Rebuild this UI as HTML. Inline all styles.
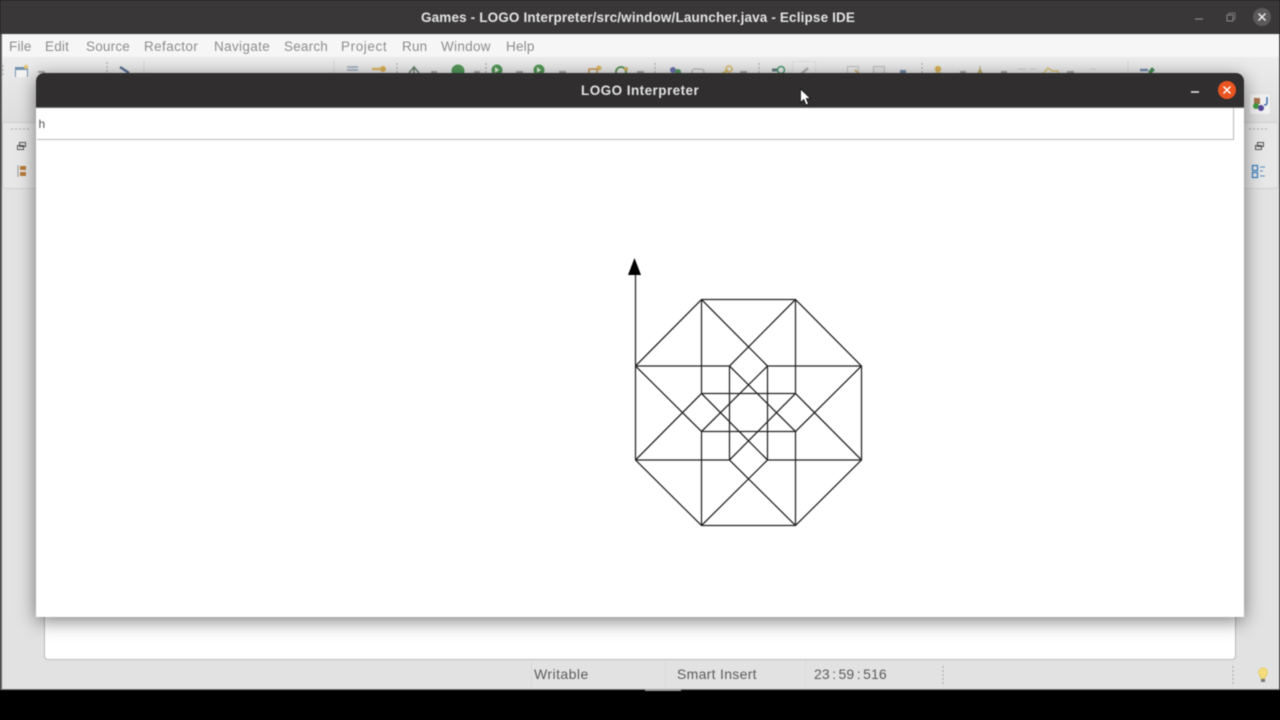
<!DOCTYPE html>
<html lang="en"><head><meta charset="utf-8"><title>Games - LOGO Interpreter</title>
<style>
html,body{margin:0;padding:0;width:1280px;height:720px;overflow:hidden;background:#000}
*{box-sizing:border-box}
#s{position:absolute;left:0;top:0;width:1280px;height:720px;overflow:hidden;font-family:"Liberation Sans","DejaVu Sans",sans-serif;filter:blur(.5px)}
.a{position:absolute}
.t{position:absolute;white-space:nowrap;line-height:1}
.m{top:40px;font-size:13.5px;color:#8d8d8d;letter-spacing:.2px}
.st{top:667px;font-size:14px;color:#5c5c5c;letter-spacing:.2px}
</style></head><body><div id="s">
<!-- Eclipse base -->
<div class="a" style="left:0;top:0;width:1280px;height:690px;background:#e2e2e2"></div>
<div class="a" style="left:0;top:0;width:1280px;height:34px;background:#393737"></div>
<div class="t" style="left:421px;top:11px;font-size:13.5px;font-weight:bold;color:#e4e4e4;letter-spacing:.15px">Games - LOGO Interpreter/src/window/Launcher.java - Eclipse IDE</div>
<div class="a" style="left:0;top:34px;width:1280px;height:23px;background:#f6f6f6"></div>
<div class="t m" style="left:9px">File</div>
<div class="t m" style="left:45px">Edit</div>
<div class="t m" style="left:86px">Source</div>
<div class="t m" style="left:144px;letter-spacing:.4px">Refactor</div>
<div class="t m" style="left:214px;letter-spacing:.35px">Navigate</div>
<div class="t m" style="left:284px">Search</div>
<div class="t m" style="left:341px;letter-spacing:.6px">Project</div>
<div class="t m" style="left:402px">Run</div>
<div class="t m" style="left:441px;letter-spacing:.3px">Window</div>
<div class="t m" style="left:506px">Help</div>
<div class="a" style="left:0;top:57px;width:1280px;height:65px;background:linear-gradient(#ececec,#dedede)"></div>
<!-- window controls -->
<svg class="a" style="left:1180px;top:0" width="100" height="34" viewBox="0 0 100 34">
<path d="M15 19h8" stroke="#8a8888" stroke-width="1.2"/>
<rect x="47" y="15" width="6" height="6" fill="none" stroke="#8a8888"/><path d="M49 15v-2h6v6h-2" fill="none" stroke="#8a8888" stroke-width=".8"/>
<circle cx="82" cy="17" r="9" fill="#5b5959"/><path d="M78.500 13.500l7 7m0-7l-7 7" stroke="#eee" stroke-width="1.500"/>
</svg>
<!-- toolbar icons -->
<svg class="a" style="left:0;top:57px;opacity:.85" width="1280" height="20" viewBox="0 57 1280 20">
<path d="M3 65v2M3 69v2M3 73v2M107 62v2M107 66v2M107 70v2" stroke="#999" stroke-width="1"/>
<path d="M144 60v16M334 60v16" stroke="#d6d6d6"/>
<rect x="15.500" y="67.500" width="12" height="10" fill="#f7f7f7" stroke="#5f84a8"/><rect x="16" y="68" width="11" height="2" fill="#5f84a8"/><circle cx="26" cy="67" r="2" fill="#e5bf55"/>
<path d="M38 72h7" stroke="#999" stroke-width="2"/>
<path d="M120 67l9 6" stroke="#405a85" stroke-width="2.500"/>
<path d="M347 67h11M347 70h11" stroke="#8b9fb5" stroke-width="1.500"/>
<path d="M372 69h8" stroke="#e0b04f" stroke-width="2.500"/><circle cx="383" cy="69" r="3" fill="#d9a83e"/>
<path d="M397 63v2M397 67v2M397 71v2M486 63v2M486 67v2M486 71v2M655 63v2M655 67v2M655 71v2M759 63v2M759 67v2M759 71v2M922 63v2M922 67v2M922 71v2" stroke="#999"/>
<path d="M409 73l5-6 5 6M414 66v8" stroke="#56705a" stroke-width="1.500" fill="none"/>
<circle cx="458" cy="71" r="6.500" fill="#3a8a3f"/><circle cx="497" cy="70" r="5.500" fill="#3a8a3f"/><path d="M495 67l4 3-4 3z" fill="#dff0d8"/><circle cx="539" cy="70" r="5.500" fill="#3a8a3f"/><path d="M537 67l4 3-4 3z" fill="#dff0d8"/>
<path d="M431 72h6M474 72h6M516 72h7M559 72h7M637 72h7M740 72h7M960 72h6M1001 72h6M1067 72h7" stroke="#999" stroke-width="2"/>
<rect x="589" y="69" width="8" height="6" fill="none" stroke="#c88a3c" stroke-width="1.500"/><circle cx="599" cy="68" r="2.500" fill="#dcae50"/>
<circle cx="621" cy="72" r="5" fill="none" stroke="#4a8b46" stroke-width="2"/><circle cx="626" cy="69" r="2" fill="#c7a84a"/>
<circle cx="673" cy="70" r="3" fill="#5b5fa8"/><circle cx="678" cy="72" r="3" fill="#3c8f4a"/>
<path d="M692 76v-4q0-3 3-3h6q3 0 3 3v4" fill="none" stroke="#a8a8a8"/>
<path d="M722 74l6-4" stroke="#d7b34e" stroke-width="2"/><circle cx="729" cy="69" r="3" fill="none" stroke="#d7b34e" stroke-width="1.500"/>
<path d="M772 70h6" stroke="#4d6b6b" stroke-width="3"/><circle cx="781" cy="70" r="3.500" fill="none" stroke="#2f8f5a" stroke-width="1.500"/>
<rect x="792.500" y="61.500" width="23" height="20" fill="#ececec" stroke="#dcdcdc"/>
<path d="M800 75l8-7" stroke="#a9a9a9" stroke-width="2.500"/>
<rect x="847.500" y="66.500" width="11" height="10" fill="none" stroke="#bbb"/><path d="M855 70l4 4" stroke="#c9ad63" stroke-width="2"/>
<rect x="873.500" y="66.500" width="11" height="10" fill="#e2e2e2" stroke="#b3b3b3"/>
<path d="M900 70h6v6h-6z" fill="#5d7fa5"/>
<circle cx="938" cy="69" r="3.200" fill="#d4aa3f"/><path d="M935 74h6" stroke="#d4aa3f" stroke-width="3"/>
<path d="M980 66l0 3M977 75l3-6 3 6z" fill="#c9b25f" stroke="#a9954d"/>
<path d="M1018 69h8M1030 69h6" stroke="#c8c8c8"/>
<path d="M1043 74l5-6 4 3h6v4" fill="none" stroke="#dcbc5f" stroke-width="1.500"/>
<path d="M1090 69h6" stroke="#cfcfcf"/>
<path d="M1128 60v16" stroke="#d6d6d6"/>
<path d="M1140 70h8" stroke="#5e7fa8" stroke-width="2.500"/><path d="M1148 72l4-5 3 3-4 4z" fill="#2f7f43"/>
</svg>
<!-- side trims -->
<div class="a" style="left:0;top:34px;width:2px;height:656px;background:#666"></div>
<div class="a" style="left:2px;top:122px;width:36px;height:67px;background:#e7e7e7;border:1px solid #d0d0d0;border-radius:2px 0 0 4px"></div>
<div class="a" style="left:1242px;top:122px;width:37px;height:67px;background:#e7e7e7;border:1px solid #d0d0d0;border-radius:0 2px 4px 0"></div>
<div class="a" style="left:1279px;top:34px;width:1px;height:656px;background:#666"></div>
<svg class="a" style="left:0;top:90px" width="36" height="100" viewBox="0 90 36 100">
<path d="M11 129h2M15 129h2M19 129h2M23 129h2M27 129h2" stroke="#aaa"/>
<rect x="17.500" y="145.500" width="6" height="4" fill="none" stroke="#555"/><rect x="19.500" y="142.500" width="6" height="4" fill="none" stroke="#555"/>
<path d="M18 165v12" stroke="#999"/><rect x="20" y="166" width="6" height="4" fill="#b87c3a"/><rect x="20" y="172" width="6" height="4" fill="#b87c3a"/>
</svg>
<svg class="a" style="left:1244px;top:90px" width="36" height="100" viewBox="1244 90 36 100">
<rect x="1249.500" y="93.500" width="21" height="21" rx="2" fill="#f0f0f0" stroke="#dedede"/>
<rect x="1254" y="98" width="6" height="6" fill="#a8744a"/><path d="M1267 97v6q0 2-3 2" fill="none" stroke="#3f6fb0" stroke-width="1.500"/>
<circle cx="1256" cy="106" r="3" fill="#3f9a46"/><circle cx="1261" cy="108" r="3" fill="#56489a"/>
<path d="M1249 129h2M1253 129h2M1257 129h2M1261 129h2M1265 129h2" stroke="#aaa"/>
<rect x="1255.500" y="145.500" width="6" height="4" fill="none" stroke="#555"/><rect x="1257.500" y="142.500" width="6" height="4" fill="none" stroke="#555"/>
<rect x="1252.500" y="165.500" width="5" height="5" fill="none" stroke="#3f82c4" stroke-width="1.300"/><rect x="1252.500" y="172.500" width="5" height="5" fill="none" stroke="#3f82c4" stroke-width="1.300"/>
<path d="M1260 167h5M1260 171h3M1260 176h5" stroke="#5a8fc0"/>
</svg>
<!-- lower editor panel -->
<div class="a" style="left:44px;top:600px;width:1192px;height:60px;background:#fff;border:1px solid #b9b9b9;border-radius:0 0 4px 4px"></div>
<!-- status -->
<div class="a" style="left:531px;top:661px;width:1px;height:28px;background:#dadada"></div>
<div class="a" style="left:665px;top:661px;width:1px;height:28px;background:#dadada"></div>
<div class="a" style="left:805px;top:661px;width:1px;height:28px;background:#dadada"></div>
<div class="t st" style="left:534px;letter-spacing:.45px">Writable</div>
<div class="t st" style="left:677px;letter-spacing:.3px">Smart Insert</div>
<div class="t st" style="left:814px;word-spacing:-1.6px;letter-spacing:.1px">23 : 59 : 516</div>
<svg class="a" style="left:930px;top:660px" width="350" height="30" viewBox="930 660 350 30">
<path d="M943 666v2M943 670v2M943 674v2M943 678v2M943 682v2M1233 666v2M1233 670v2M1233 674v2M1233 678v2M1233 682v2" stroke="#a5a5a5"/>
<path d="M1263 668c-3 0-4.500 2-4.500 4.500 0 2.500 2.500 3.500 2.500 6h4c0-2.500 2.500-3.500 2.500-6 0-2.500-1.500-4.500-4.500-4.500z" fill="#f3dd7d" stroke="#e2c65a" stroke-width=".7"/><rect x="1261" y="679" width="4" height="3" fill="#777"/>
</svg>
<div class="a" style="left:0;top:689px;width:1280px;height:1px;background:#777"></div>
<div class="a" style="left:0;top:690px;width:1280px;height:30px;background:#000"></div>
<div class="a" style="left:645px;top:689px;width:36px;height:2px;background:#999"></div>
<!-- LOGO window -->
<div class="a" style="left:36px;top:73px;width:1208px;height:544px;background:#fff;border-radius:8px 8px 0 0;box-shadow:0 4px 18px rgba(0,0,0,.5)"></div>
<div class="a" style="left:36px;top:73px;width:1208px;height:35px;background:#302e2e;border-radius:8px 8px 0 0;border-bottom:1px solid #6a6a6a"></div>
<div class="t" style="left:581px;top:84px;font-size:13.5px;font-weight:bold;color:#e2e2e2;letter-spacing:.45px">LOGO Interpreter</div>
<svg class="a" style="left:1180px;top:76px" width="60" height="30" viewBox="1180 76 60 30">
<path d="M1191 92h8" stroke="#eee" stroke-width="1.500"/>
<circle cx="1227" cy="90" r="9" fill="#e95420"/><path d="M1223.500 86.500l7 7m0-7l-7 7" stroke="#fff" stroke-width="1.500"/>
</svg>
<div class="a" style="left:37px;top:108px;width:1197px;height:32px;background:#fff;border-right:1px solid #b8b8b8;border-bottom:1px solid #b8b8b8"></div>
<div class="t" style="left:38.500px;top:118px;font-size:12px;color:#555">h</div>
<!-- Turtle drawing -->
<svg class="a" style="left:620px;top:250px" width="250" height="285" viewBox="620 250 250 285">
<path fill="none" stroke="#222" stroke-width="1.250" d="
M635.500 366V272
M635.500 366L701.500 299.500H795.500L861.500 366V460L795.500 525.500H701.500L635.500 460Z
M701.500 299.500V393.500M795.500 299.500V393.500M701.500 431.500V525.500M795.500 431.500V525.500
M635.500 366H729.500M767.500 366H861.500M635.500 460H729.500M767.500 460H861.500
M729.500 366V460M767.500 366V460M701.500 393.500H795.500M701.500 431.500H795.500
M701.500 299.500L767.500 366M795.500 299.500L729.500 366
M729.500 366L795.500 431.500M767.500 366L701.500 431.500
M701.500 393.500L767.500 460M795.500 393.500L729.500 460
M635.500 366L701.500 431.500M635.500 460L701.500 393.500
M861.500 366L795.500 431.500M861.500 460L795.500 393.500
M701.500 525.500L767.500 460M795.500 525.500L729.500 460"/>
<path d="M634.500 258L641 275H628Z" fill="#000"/>
</svg>
<!-- Cursor -->
<svg class="a" style="left:797px;top:86px" width="16" height="22" viewBox="0 0 16 22">
<path d="M3.500 3V16.500L6.800 13.500L9 19L11.500 18L9.300 12.500H13.500Z" fill="#fff" stroke="#111" stroke-width=".8"/>
</svg>
</div></body></html>
